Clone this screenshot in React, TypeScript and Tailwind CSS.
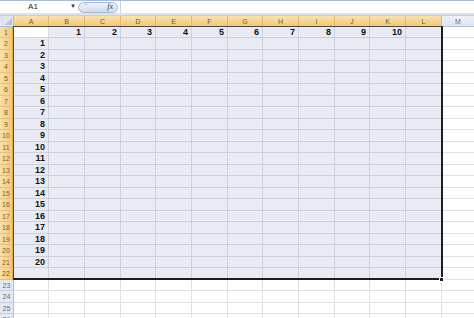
import React from 'react'

const colLetters = ['A', 'B', 'C', 'D', 'E', 'F', 'G', 'H', 'I', 'J', 'K', 'L']
const colWidths = [
  'w-[35px]', 'w-[36px]', 'w-[36px]', 'w-[35px]', 'w-[36px]', 'w-[36px]',
  'w-[35px]', 'w-[36px]', 'w-[36px]', 'w-[35px]', 'w-[36px]', 'w-[36px]',
]
const rowHeights = ['h-[11px]', 'h-[12px]']

const font = { fontFamily: '"Liberation Sans", Arial, sans-serif' }

// value for a cell in the selected block
const cellValue = (row: number, col: number) => {
  if (row === 1 && col >= 1 && col <= 10) return String(col)
  if (col === 0 && row >= 2 && row <= 21) return String(row - 1)
  return ''
}

function FormulaBar() {
  return (
    <div className="h-[16px] bg-[#dde3ec] border-b border-[#c5cfdd]">
      <div className="h-[13px] bg-white border-t border-[#a9bdd9] flex items-stretch">
        <div className="w-[78px] flex items-center relative">
          <span className="flex-1 text-center text-[8px] text-[#222] pr-[12px] leading-none">A1</span>
          <span className="absolute left-[70px] top-[2px] text-[6px] text-[#333] leading-none">▼</span>
        </div>
        <div className="w-[42px] flex items-center">
          <div className="h-[11px] w-[40px] rounded-full bg-gradient-to-b from-[#eef3f9] to-[#cfdcec] border border-[#a4b8d3] flex items-center justify-between px-[4px]">
            <span className="text-[6px] text-[#6f87a8] leading-none">⌒</span>
            <span className="text-[8px] italic font-serif text-[#3b3b3b] leading-none" style={{ fontFamily: '"Liberation Serif", serif' }}>fx</span>
          </div>
        </div>
        <div className="flex-1 bg-white border-l border-[#c8d3e2]" />
      </div>
    </div>
  )
}

function HeaderRow() {
  return (
    <div className="flex h-[11px]">
      <div className="w-[14px] shrink-0 bg-[#dfe6f0] border-r border-b border-[#b3c0d3] relative overflow-hidden">
        <div className="absolute right-[1px] bottom-[1px] w-0 h-0 border-l-[7px] border-l-transparent border-b-[7px] border-b-[#b6c4d8]" />
      </div>
      {colLetters.map((c, i) => (
        <div
          key={c}
          className={`${colWidths[i]} shrink-0 bg-gradient-to-b from-[#fae2ad] to-[#f4c873] border-r border-[#e6b86a] border-b border-b-[#c69a4a] flex items-center justify-center text-[7px] text-[#6b5a3c] leading-none`}
        >
          {c}
        </div>
      ))}
      <div className="flex-1 bg-gradient-to-b from-[#eef2f8] to-[#dde5f0] border-b border-[#b3c0d3] flex items-center justify-center text-[7px] text-[#5d6f8c] leading-none">
        M
      </div>
    </div>
  )
}

function Row({ n }: { n: number }) {
  const selected = n <= 22
  return (
    <div className={`flex ${rowHeights[(n + 1) % 2]}`}>
      <div
        className={`w-[14px] shrink-0 flex items-center justify-center text-[7px] leading-none border-b ${
          selected
            ? 'bg-gradient-to-r from-[#fae0a8] to-[#f5c977] border-r-2 border-r-[#e0a94c] border-b-[#e6c07e] text-[#7c5f2a]'
            : 'bg-[#e3e9f2] border-r border-r-[#b3c0d3] border-b-[#c4cfdf] text-[#5d6f8c]'
        }`}
      >
        {n}
      </div>
      {colLetters.map((c, i) => {
        const isActive = n === 1 && i === 0
        return (
          <div
            key={c}
            className={`${colWidths[i]} shrink-0 border-r border-b flex items-center justify-end pr-[3px] text-[9px] font-bold text-[#111] leading-none ${
              isActive
                ? 'bg-white border-[#d6dae3]'
                : selected
                ? 'bg-[#e8ebf3] border-[#cdd1dc]'
                : 'bg-white border-[#dfe1e5]'
            }`}
          >
            {selected ? cellValue(n, i) : ''}
          </div>
        )
      })}
      <div className="flex-1 bg-white border-b border-[#dfe1e5]" />
    </div>
  )
}

export default function App() {
  const rows = [...Array(26)].map((_, i) => i + 1)
  return (
    <div className="w-[474px] h-[318px] overflow-hidden bg-white select-none" style={font}>
      <FormulaBar />
      <HeaderRow />
      <div className="relative">
        {rows.map(n => (
          <Row key={n} n={n} />
        ))}
        {/* selection outline A1:L22 */}
        <div className="absolute left-[13px] top-[-1px] w-[430px] h-[254px] border-l border-t border-[#4a4a4a] border-r-2 border-b-2 border-r-[#1e1e1e] border-b-[#1e1e1e] pointer-events-none" />
        <div className="absolute left-[439px] top-[250px] w-[5px] h-[5px] bg-[#1e1e1e] border border-white pointer-events-none" />
      </div>
    </div>
  )
}
